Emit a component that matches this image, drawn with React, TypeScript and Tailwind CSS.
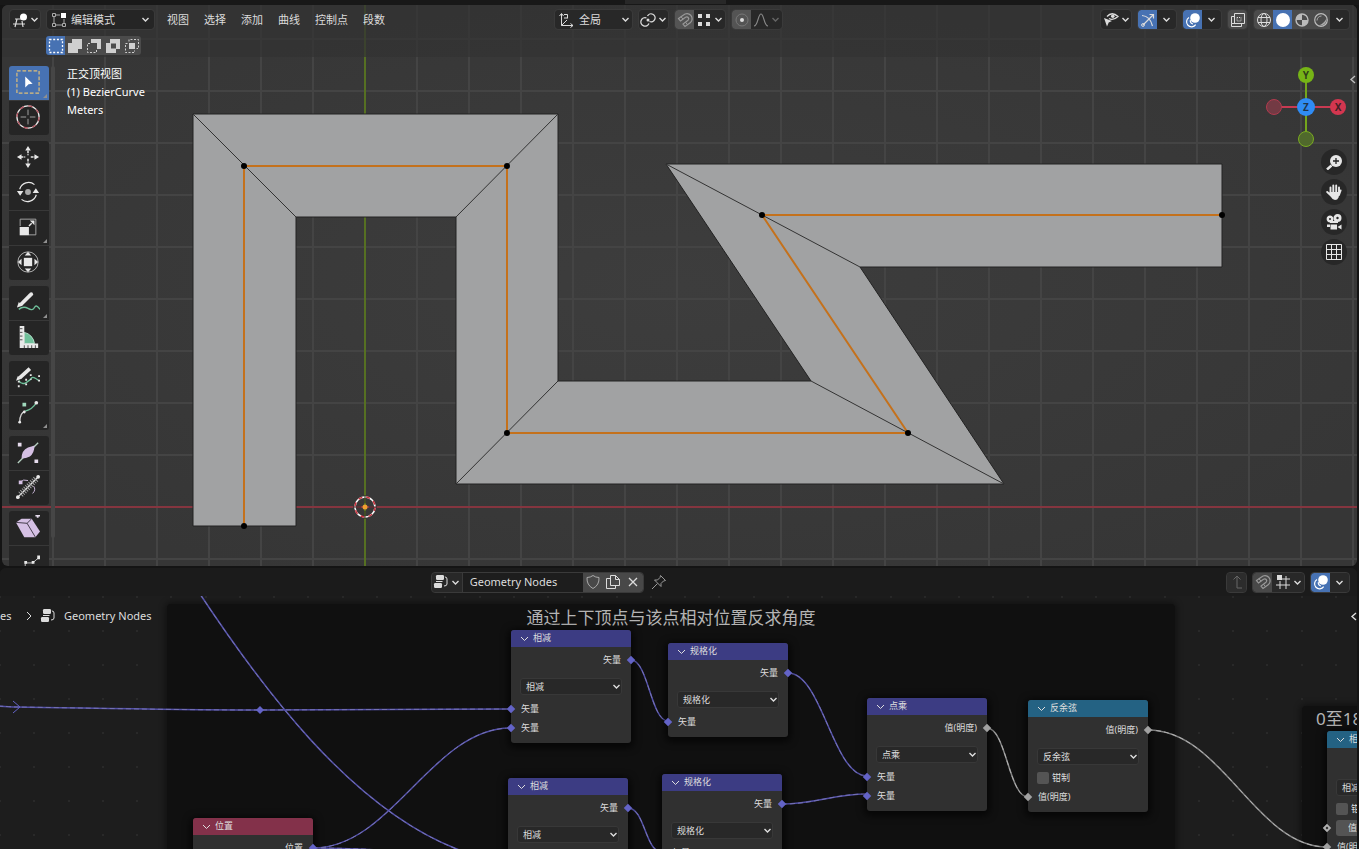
import type { ReactNode } from "react";

type Row =
  | { kind: "check"; label: string }
  | { kind: "field"; label: string }
  | { kind: "input"; label: string };

type GraphNode = {
  id: string;
  x: number;
  y: number;
  title: string;
  tone: "vector" | "math" | "input";
  output: string;
  outputType: "vector" | "value";
  operation?: string;
  rows: Row[];
};

const menus = ["视图", "选择", "添加", "曲线", "控制点", "段数"];

const nodes: GraphNode[] = [
  {
    id: "subtract-a",
    x: 511,
    y: 62,
    title: "相减",
    tone: "vector",
    output: "矢量",
    outputType: "vector",
    operation: "相减",
    rows: [
      { kind: "input", label: "矢量" },
      { kind: "input", label: "矢量" },
    ],
  },
  {
    id: "normalize-a",
    x: 668,
    y: 75,
    title: "规格化",
    tone: "vector",
    output: "矢量",
    outputType: "vector",
    operation: "规格化",
    rows: [{ kind: "input", label: "矢量" }],
  },
  {
    id: "subtract-b",
    x: 508,
    y: 210,
    title: "相减",
    tone: "vector",
    output: "矢量",
    outputType: "vector",
    operation: "相减",
    rows: [
      { kind: "input", label: "矢量" },
      { kind: "input", label: "矢量" },
    ],
  },
  {
    id: "normalize-b",
    x: 662,
    y: 206,
    title: "规格化",
    tone: "vector",
    output: "矢量",
    outputType: "vector",
    operation: "规格化",
    rows: [{ kind: "input", label: "矢量" }],
  },
  {
    id: "dot",
    x: 867,
    y: 130,
    title: "点乘",
    tone: "vector",
    output: "值(明度)",
    outputType: "value",
    operation: "点乘",
    rows: [
      { kind: "input", label: "矢量" },
      { kind: "input", label: "矢量" },
    ],
  },
  {
    id: "arccos",
    x: 1028,
    y: 132,
    title: "反余弦",
    tone: "math",
    output: "值(明度)",
    outputType: "value",
    operation: "反余弦",
    rows: [
      { kind: "check", label: "钳制" },
      { kind: "input", label: "值(明度)" },
    ],
  },
  {
    id: "position",
    x: 193,
    y: 250,
    title: "位置",
    tone: "input",
    output: "位置",
    outputType: "vector",
    rows: [],
  },
  {
    id: "subtract-c",
    x: 1327,
    y: 163,
    title: "相减",
    tone: "math",
    output: "值(明度)",
    outputType: "value",
    operation: "相减",
    rows: [
      { kind: "check", label: "钳制" },
      { kind: "field", label: "值(明度)" },
      { kind: "input", label: "值(明度)" },
    ],
  },
];

const vectorLinks = [
  "M-10 138 C5 138 10 139 16 139 C90 140 170 142 260 142 L511 141",
  "M196 20 C258 114 350 242 462 283",
  "M313 280 C392 280 432 160 511 160",
  "M313 280 C392 280 430 288 508 288",
  "M631 92 C648 92 651 153 668 153",
  "M628 240 C645 240 645 284 662 284",
  "M788 105 C822 105 833 208 867 208",
  "M782 236 C815 236 834 226 867 226",
];

const valueLinks = [
  "M987 160 C1006 160 1009 229 1028 229",
  "M1148 162 C1222 162 1256 279 1327 279",
];

const headerTone = {
  vector: "bg-[#3c3c83]",
  math: "bg-[#246283]",
  input: "bg-[#83314a]",
};

function Icon({ children, size = 16 }: { children: ReactNode; size?: number }) {
  return (
    <svg
      width={size}
      height={size}
      viewBox={size === 16 ? "0 0 16 16" : "0 0 26 26"}
      fill="none"
      stroke="currentColor"
      className="shrink-0"
      aria-hidden="true"
    >
      {children}
    </svg>
  );
}

function Chevron() {
  return (
    <svg width="9" height="9" viewBox="0 0 9 9" fill="none" stroke="currentColor" strokeWidth="1.4" className="pointer-events-none shrink-0" aria-hidden="true">
      <path d="M1.5 3L4.5 6L7.5 3" />
    </svg>
  );
}

function MagnetIcon() {
  return (
    <Icon>
      <path d="M1.5 6.5L6.5 3A5 5 0 0 1 13.5 10.5L8 14.5L6 12L11 8.2A1.8 1.8 0 0 0 8.5 5.3L3.5 9Z" strokeWidth="1.2" />
      <path d="M10.5 12.7L8.500 10.2M4 4.700L6 7.200" />
    </Icon>
  );
}

function OverlayIcon() {
  return (
    <Icon>
      <circle cx="10" cy="6" r="4.8" fill="currentColor" stroke="none" />
      <path d="M4 5.5A5 5 0 1 0 10.7 12.6" strokeWidth="1.2" />
      <path d="M5.4 8.2A3 3 0 0 0 8 12" strokeWidth="1.2" />
    </Icon>
  );
}

function NodeTreeIcon() {
  return (
    <Icon>
      <rect x="3" y="1" width="8" height="5" rx="1.2" fill="currentColor" stroke="none" />
      <rect x="1" y="9" width="8" height="5" rx="1.2" fill="currentColor" stroke="none" />
      <path d="M3 7.5H9.5M12 3Q14 3 14 5V10Q14 12 11 12" />
    </Icon>
  );
}

type HeaderButtonProps = {
  label: string;
  children: ReactNode;
  className?: string;
};

function HeaderButton({ label, children, className = "w-[19px] bg-[#4b4b4b]" }: HeaderButtonProps) {
  return (
    <button type="button" aria-label={label} className={`flex h-[19px] items-center justify-center ${className}`}>
      {children}
    </button>
  );
}

function Group({ children }: { children: ReactNode }) {
  return (
    <div className="flex overflow-hidden rounded-[3px] bg-[#282828] outline outline-[#3a3a3a]">{children}</div>
  );
}

function ViewportHeader() {
  return (
    <header className="bg-[#333]/75 px-2 pt-[5px] pb-0.5 text-[#dcdcdc]">
      <div className="grid grid-cols-[1fr_auto_1fr] items-center">
        <div className="flex items-center">
          <Group>
            <HeaderButton label="编辑器类型" className="w-[30px] gap-0.5">
              <Icon>
                <path d="M3 7H9M1 12H13M5 7L3 15M10 9L11 15" strokeWidth="1.2" />
                <circle cx="11.5" cy="5" r="3.5" fill="#fff" stroke="none" />
              </Icon>
              <Chevron />
            </HeaderButton>
          </Group>
          <div className="ml-[7px] flex h-[19px] w-[107px] items-center rounded-[3px] bg-[#252525] pr-1 pl-1 outline outline-[#3a3a3a]">
            <Icon>
              <path d="M3 5V11M5 3H9M5 13H11M13 7V11" stroke="#aaa" />
              <path d="M1.5 1.5H4.5V4.5H1.5ZM1.5 11.5H4.5V14.5H1.5ZM11.5 11.5H14.5V14.5H11.5Z" stroke="#aaa" />
              <rect x="10" y="1" width="5" height="5" fill="#fff" stroke="none" />
            </Icon>
            <select aria-label="模式" className="ml-1 min-w-0 flex-1 appearance-none bg-transparent">
              <option>编辑模式</option>
              <option>物体模式</option>
            </select>
            <Chevron />
          </div>
          <nav className="ml-[13px] flex gap-[15px]">
            {menus.map((menu) => (
              <button key={menu} type="button">
                {menu}
              </button>
            ))}
          </nav>
        </div>

        <div className="flex items-center gap-[7px] pr-[22px]">
          <div className="flex h-[19px] w-[77px] items-center rounded-[3px] bg-[#282828] pr-0.5 pl-1 outline outline-[#3a3a3a]">
            <Icon>
              <path d="M2.5 2V13.5H14M2.5 13.5L8 8M0.5 4L2.5 1.5L4.5 4M11.5 11.5L14 13.5L11.5 15.5" />
              <path d="M5 2.5H8.5M8.5 2.5V6.5M5 6H8" />
            </Icon>
            <select aria-label="变换坐标系" className="ml-1 min-w-0 flex-1 appearance-none bg-transparent">
              <option>全局</option>
              <option>局部</option>
            </select>
            <Chevron />
          </div>
          <Group>
            <HeaderButton label="轴心点" className="w-[29px] gap-0.5">
              <Icon>
                <path d="M9 11.500A4.200 4.200 0 1 1 6.500 6M7.500 4A4 4 0 1 1 9.500 9.500" strokeWidth="1.3" />
                <circle cx="8" cy="8" r="1.5" fill="currentColor" stroke="none" />
              </Icon>
              <Chevron />
            </HeaderButton>
          </Group>
          <Group>
            <HeaderButton label="吸附" className="w-[19px] bg-[#545454] text-[#999]">
              <MagnetIcon />
            </HeaderButton>
            <HeaderButton label="吸附至" className="w-[31px] gap-0.5">
              <Icon>
                <path d="M2 2h4v4h-4zM10 2h4v4h-4zM2 10h4v4h-4zM10 10h4v4h-4z" fill="currentColor" stroke="none" />
              </Icon>
              <Chevron />
            </HeaderButton>
          </Group>
          <Group>
            <HeaderButton label="衰减编辑" className="w-[19px] bg-[#545454]">
              <Icon>
                <circle cx="8" cy="8" r="6" stroke="#777" />
                <circle cx="8" cy="8" r="2" fill="currentColor" stroke="none" />
              </Icon>
            </HeaderButton>
            <HeaderButton label="衰减类型" className="w-[31px] gap-0.5 text-[#666]">
              <Icon>
                <path d="M1 14C5 14 5 2 8 2S11 14 15 14" stroke="#888" strokeWidth="1.2" />
              </Icon>
              <Chevron />
            </HeaderButton>
          </Group>
        </div>

        <div className="flex items-center justify-end gap-[7px]">
          <Group>
            <HeaderButton label="可见性" className="w-[30px] gap-0.5">
              <Icon>
                <path d="M4 4.5Q9 -1 15 4.5Q10 9 6 6.5" strokeWidth="1.3" />
                <circle cx="9.8" cy="4.3" r="1.8" fill="currentColor" stroke="none" />
                <path d="M1 6L9 9L5.7 10.5L4 14.5Z" fill="currentColor" stroke="none" />
              </Icon>
              <Chevron />
            </HeaderButton>
          </Group>
          <Group>
            <HeaderButton label="显示 Gizmo" className="w-[19px] bg-[#4772b3]">
              <Icon>
                <path d="M3 13L13 3M9.5 2.5H13.5V6.5M2 3.5Q10 4 12.5 14" strokeWidth="1.2" />
                <circle cx="3" cy="13" r="1.4" />
              </Icon>
            </HeaderButton>
            <HeaderButton label="Gizmo 选项" className="w-[19px]">
              <Chevron />
            </HeaderButton>
          </Group>
          <Group>
            <HeaderButton label="显示叠加层" className="w-[19px] bg-[#4772b3] text-white">
              <OverlayIcon />
            </HeaderButton>
            <HeaderButton label="叠加层选项" className="w-[19px]">
              <Chevron />
            </HeaderButton>
          </Group>
          <Group>
            <HeaderButton label="透视模式">
              <Icon>
                <path d="M5 11.5H1.5V14.5H11.5V11.5M4.5 1.5H14.5V11.5H4.5Z" />
                <path d="M1.5 11.5V4.5H4.5" />
                <path d="M7 5.5H11V9H7Z" strokeDasharray="1 1" />
              </Icon>
            </HeaderButton>
          </Group>
          <Group>
            <HeaderButton label="线框">
              <Icon>
                <circle cx="8" cy="8" r="6.5" />
                <ellipse cx="8" cy="8" rx="3" ry="6.5" />
                <path d="M2 5.5H14M2 10.5H14" />
              </Icon>
            </HeaderButton>
            <HeaderButton label="实体" className="w-[19px] bg-[#4772b3]">
              <Icon>
                <circle cx="8" cy="8" r="7" fill="#fff" stroke="none" />
              </Icon>
            </HeaderButton>
            <HeaderButton label="材质预览">
              <Icon>
                <circle cx="8" cy="8" r="6" strokeWidth="1.4" stroke="#bbb" />
                <path d="M8 2A6 6 0 0 0 2 8H8ZM8 8V14A6 6 0 0 0 14 8Z" fill="#bbb" stroke="none" />
              </Icon>
            </HeaderButton>
            <HeaderButton label="渲染">
              <Icon>
                <circle cx="8" cy="8" r="6.3" strokeWidth="1.2" stroke="#bbb" />
                <path d="M4 8.5A4.5 4.5 0 0 1 8.5 4" stroke="#aaa" />
                <path d="M6 13.5A6.5 6.5 0 0 0 13.500 6Q12 11 6 13.500Z" fill="#aaa" stroke="none" />
              </Icon>
            </HeaderButton>
            <HeaderButton label="着色选项" className="w-[19px]">
              <Chevron />
            </HeaderButton>
          </Group>
        </div>
      </div>

      <div className="mt-[7px] ml-9 flex w-fit overflow-hidden rounded-[3px] text-[#cfcfcf]">
        <HeaderButton label="新选区" className="w-[19px] bg-[#4772b3] text-white">
          <Icon>
            <path d="M1.5 1.5H14.5V14.5H1.5Z" strokeDasharray="2 1.7" strokeWidth="1.3" />
          </Icon>
        </HeaderButton>
        <HeaderButton label="扩展选区">
          <Icon>
            <path d="M5 1H15V11H11V15H1V5H5Z" fill="currentColor" stroke="none" />
          </Icon>
        </HeaderButton>
        <HeaderButton label="减去选区">
          <Icon>
            <path d="M5 1H15V11H11V5H5Z" fill="currentColor" stroke="none" />
            <path d="M4 5.5H1.5V14.5H10.5V12" strokeDasharray="2 1.5" />
          </Icon>
        </HeaderButton>
        <HeaderButton label="差集选区">
          <Icon>
            <path d="M5 1H15V11H11V15H1V5H5ZM6 5.5V10.5H11V5.5Z" fill="currentColor" fillRule="evenodd" stroke="none" />
          </Icon>
        </HeaderButton>
        <HeaderButton label="交集选区">
          <Icon>
            <path d="M5 5H11V11H5Z" fill="currentColor" stroke="none" />
            <path d="M5 3.5V1.5H14.5V10.5H12.5M3.5 5.5H1.5V14.5H10.5V12.5" strokeDasharray="2 1.5" />
          </Icon>
        </HeaderButton>
      </div>
    </header>
  );
}

type Tool = { label: string; icon: ReactNode; active?: boolean; more?: boolean };

const toolGroups: Tool[][] = [
  [
    {
      label: "框选",
      active: true,
      more: true,
      icon: (
        <>
          <path d="M1 1H25V25H1Z" stroke="#e0c07a" strokeWidth="1.3" strokeDasharray="4 2" />
          <path d="M10 7L18 15L13.6 15.4L10 19Z" fill="#fff" stroke="none" />
        </>
      ),
    },
    {
      label: "游标",
      icon: (
        <>
          <circle cx="13" cy="13" r="12" stroke="#e8e8e8" strokeWidth="1.4" />
          <circle cx="13" cy="13" r="12" stroke="#b0505c" strokeWidth="1.4" strokeDasharray="4.7 4.7" />
          <path d="M13 5V11M13 15V21M5 13H11M15 13H21" stroke="#aaa" />
        </>
      ),
    },
  ],
  [
    {
      label: "移动",
      icon: (
        <>
          <path d="M13 6V11M13 15V20M5 13H10M16 13H21" strokeWidth="1.6" strokeDasharray="3 1" />
          <path d="M13 1L16 6H10ZM13 25L16 20H10ZM1 13L6 10V16ZM25 13L20 10V16Z" fill="currentColor" stroke="none" />
        </>
      ),
    },
    {
      label: "旋转",
      icon: (
        <>
          <path d="M4 10A10 10 0 0 1 20 5M22 16A10 10 0 0 1 6 21" strokeWidth="1.3" />
          <path d="M1 12H8L4.5 17ZM18 14H25L21.5 9Z" fill="currentColor" stroke="none" />
          <circle cx="13" cy="13" r="3.2" fill="#aaa" stroke="none" />
        </>
      ),
    },
    {
      label: "缩放",
      more: true,
      icon: (
        <>
          <path d="M4.5 12V4.5H21.5V21.5H14" stroke="#aaa" />
          <rect x="4" y="13" width="10" height="9" fill="currentColor" stroke="none" />
          <path d="M14 12L17 9" strokeWidth="1.5" />
          <path d="M20 6V11L15 6Z" fill="currentColor" stroke="none" />
        </>
      ),
    },
    {
      label: "变换",
      icon: (
        <>
          <circle cx="13" cy="13" r="11" stroke="#bbb" />
          <rect x="8.5" y="8.5" width="9" height="9" fill="currentColor" stroke="none" />
          <path d="M13 2L16.5 6H9.5ZM13 24L16.5 20H9.5ZM2 13L6 9.5V16.5ZM24 13L20 9.5V16.5Z" fill="currentColor" stroke="none" />
        </>
      ),
    },
  ],
  [
    {
      label: "标注",
      more: true,
      icon: (
        <>
          <path d="M3 21Q8 17 13 20T20 19T26 21" stroke="#6fc09a" strokeWidth="1.5" />
          <path d="M5 16L16 5" strokeWidth="4" />
          <path d="M1 19L3 13L7 17Z" fill="currentColor" stroke="none" />
          <circle cx="16.5" cy="4.5" r="2" fill="currentColor" stroke="none" />
        </>
      ),
    },
    {
      label: "测量",
      icon: (
        <>
          <path d="M9 8A14 14 0 0 1 20 20H9Z" fill="#6fc09a" stroke="#bde6d0" />
          <path d="M4 1H9V20H24V25H4Z" fill="currentColor" stroke="none" />
          <path d="M4 4H7M4 8H7M4 12H7M4 16H7M9 25V22M13 25V22M17 25V22M21 25V22" stroke="#444" />
        </>
      ),
    },
  ],
  [
    {
      label: "绘制",
      icon: (
        <>
          <path d="M3 17Q6 22 11 19T17 14T25 17" stroke="#6fc09a" strokeWidth="1.5" />
          <path d="M4 14L15 4" strokeWidth="4" />
          <path d="M0 17L2 12L6 15Z" fill="currentColor" stroke="none" />
          <path d="M3 17V24M11 15V23M16 10V16M25 11V19" strokeDasharray="2 3" strokeWidth="2" />
        </>
      ),
    },
    {
      label: "曲线笔",
      more: true,
      icon: (
        <>
          <path d="M4 24Q4 14 10 12" stroke="#d0d0d0" strokeWidth="1.5" />
          <path d="M10 12Q18 10 22 3" stroke="#6fc09a" strokeWidth="1.5" />
          <rect x="7" y="3" width="4" height="4" fill="#9fd8bc" stroke="none" />
          <circle cx="22" cy="3" r="2" fill="currentColor" stroke="none" />
          <circle cx="9" cy="13" r="1.5" fill="currentColor" stroke="none" />
          <circle cx="4" cy="24" r="1.5" fill="currentColor" stroke="none" />
        </>
      ),
    },
  ],
  [
    {
      label: "半径",
      icon: (
        <>
          <path d="M2 25L24 3" stroke="#b5cfc0" strokeWidth="1.5" />
          <path d="M6 20Q6 11 13 8Q17 7 20 6Q20 14 15 18Q11 20 6 20Z" fill="#d5c0e4" stroke="none" />
          <path d="M2 3H6V7H2ZM20 21H24V25H20Z" fill="#e6dced" stroke="none" />
        </>
      ),
    },
    {
      label: "倾斜",
      icon: (
        <>
          <path d="M2 24L25 1" strokeWidth="1.4" />
          <path d="M5 21L22 4" strokeWidth="7" strokeDasharray="1 1.5" stroke="#a9a9a9" />
          <path d="M4 8Q8 4 13 6M19 12Q22 16 18 20" stroke="#d5c0e4" />
          <circle cx="2" cy="24" r="2" fill="currentColor" stroke="none" />
          <circle cx="24" cy="2" r="2" fill="currentColor" stroke="none" />
          <rect x="3" y="6" width="4" height="4" fill="#d5c0e4" stroke="none" />
        </>
      ),
    },
  ],
  [
    {
      label: "切变",
      icon: (
        <>
          <path d="M0 8L6 4H17L26 18L21 24H9Z" fill="#d5c0e4" stroke="none" />
          <path d="M0 8L12 9L21 24M12 9L17 4" stroke="#3a3340" />
          <path d="M23.5 -2V3M21 0.500H26" stroke="#e6dced" strokeWidth="2" />
        </>
      ),
    },
    {
      label: "随机",
      icon: (
        <>
          <path d="M10 25V14H18L25 8" stroke="#ccc" />
          <path d="M9 12H12V15H9ZM17 12H20V15H17ZM23 6H27V10H23Z" fill="currentColor" stroke="none" />
        </>
      ),
    },
  ],
];

function Toolbar() {
  return (
    <aside className="flex h-full gap-0.5 overflow-hidden pt-[9px] pl-[7px]">
      <div className="flex w-10 flex-col gap-1.5">
        {toolGroups.map((group) => (
          <div key={group[0].label} className="flex shrink-0 flex-col gap-px overflow-hidden rounded-[3px] bg-[#383838]">
            {group.map((tool) => (
              <button
                key={tool.label}
                type="button"
                aria-label={tool.label}
                aria-pressed={!!tool.active}
                className={`relative flex h-[34px] items-center justify-center pr-0.5 pb-0.5 text-[#e8e8e8] ${
                  tool.active ? "bg-[#4772b3]" : "bg-[#252525]"
                }`}
              >
                <Icon size={24}>{tool.icon}</Icon>
                {tool.more && (
                  <svg width="4" height="4" className="absolute right-0.5 bottom-0.5" aria-hidden="true">
                    <path d="M4 0V4H0Z" fill="#909090" />
                  </svg>
                )}
              </button>
            ))}
          </div>
        ))}
      </div>
      <div className="mb-7 w-1 rounded-full bg-[#464646]" />
    </aside>
  );
}

function AxisGizmo() {
  return (
    <svg width="82" height="80" viewBox="0 0 82 80" className="text-[10px] font-bold" role="img" aria-label="视图轴向">
      <path d="M9 40H73" stroke="#c93a52" strokeWidth="2" />
      <path d="M41 8V72" stroke="#74a51c" strokeWidth="2" />
      <circle cx="9" cy="40" r="7.5" fill="#733a44" stroke="#b03c4f" />
      <circle cx="41" cy="72" r="7.5" fill="#50692c" stroke="#7aab22" />
      <circle cx="41" cy="8" r="8" fill="#76b416" />
      <circle cx="73" cy="40" r="8" fill="#d3364f" />
      <circle cx="41" cy="40" r="9" fill="#2f8cf5" />
      <g fill="#1b1b1b" fillOpacity="0.8" textAnchor="middle">
        <text x="41" y="12">Y</text>
        <text x="73" y="44">X</text>
        <text x="41" y="44">Z</text>
      </g>
    </svg>
  );
}

const navButtons: { label: string; icon: ReactNode }[] = [
  {
    label: "缩放视图",
    icon: (
      <>
        <circle cx="10" cy="7" r="6" fill="currentColor" stroke="none" />
        <path d="M5.5 11.5L1 15.5" strokeWidth="2.5" />
        <path d="M10 4V10M7 7H13" stroke="#222" strokeWidth="1.3" />
      </>
    ),
  },
  {
    label: "平移视图",
    icon: (
      <>
        <path
          d="M4.5 9.5V3.5M7.3 8V1.5M10.2 8V1.5M13 9V3.5M5.5 12L1.2 8M14.6 6.5L13 11"
          strokeWidth="1.9"
          strokeLinecap="round"
        />
        <path d="M3.6 8H14L12.5 13.5Q11.5 16 9 16Q6.5 16 5 13Z" fill="currentColor" stroke="none" />
      </>
    ),
  },
  {
    label: "相机视图",
    icon: (
      <>
        <circle cx="4" cy="5" r="2.2" strokeWidth="2.4" />
        <circle cx="11.5" cy="4" r="2.6" strokeWidth="2.8" />
        <path d="M4 7H12V9H4ZM4.5 10.5H11V15.5H4.500ZM11.5 13L15.5 10.5V15.5ZM1 10.500H4V13H1Z" fill="currentColor" stroke="none" />
      </>
    ),
  },
  {
    label: "切换正交",
    icon: <path d="M0.5 0.5H15.5V15.5H0.5ZM5.5 0V16M10.5 0V16M0 5.5H16M0 10.5H16" />,
  },
];

function NavColumn() {
  return (
    <div className="mr-2.5 ml-auto flex flex-col items-end pt-2.5">
      <AxisGizmo />
      <div className="mt-0.5 flex flex-col gap-1">
        {navButtons.map((button) => (
          <button
            key={button.label}
            type="button"
            aria-label={button.label}
            className="flex size-[26px] items-center justify-center rounded-full bg-[#272727] text-[#e6e6e6]"
          >
            <Icon>{button.icon}</Icon>
          </button>
        ))}
      </div>
    </div>
  );
}

// World origin sits at 363,502 and one grid unit spans 52px.
function Scene() {
  const points = [
    [242, 521],
    [242, 161],
    [505, 161],
    [505, 428],
    [906, 428],
    [760, 210],
    [1220, 210],
  ];

  return (
    <svg className="absolute inset-0 h-full w-full" role="img" aria-label="BezierCurve">
      <defs>
        <pattern id="grid" x="-2" y="-19" width="52" height="52" patternUnits="userSpaceOnUse">
          <rect width="2" height="52" fill="#444" />
          <rect width="52" height="2" fill="#444" />
        </pattern>
        <radialGradient id="backdrop" cx="50%" cy="50%" r="60%">
          <stop offset="0" stopColor="#3d3d3d" />
          <stop offset="1" stopColor="#363636" />
        </radialGradient>
      </defs>
      <rect width="100%" height="100%" fill="url(#backdrop)" />
      <rect width="100%" height="100%" fill="url(#grid)" />
      <line x1="0" x2="100%" y1="502" y2="502" stroke="#85353f" strokeWidth="2" />
      <line x1="363" x2="363" y1="0" y2="100%" stroke="#567022" strokeWidth="2" />

      <path
        d="M191 109H556V376H809L664 159H1220V262H858L1002 479H454V212H294V521H191Z"
        fill="#a1a2a3"
        stroke="#222"
      />
      <path
        d="M191 109L294 212M556 109L454 212M556 376L454 479M809 376L1002 479M664 159L858 262"
        stroke="#333"
      />
      <polyline points={points.join(" ")} fill="none" stroke="#c4711c" strokeWidth="2" />
      {points.map(([x, y]) => (
        <circle key={`${x}-${y}`} cx={x} cy={y} r="3" fill="#000" />
      ))}

      <circle cx="363" cy="502" r="10" fill="none" stroke="#fff" strokeWidth="1.5" />
      <circle cx="363" cy="502" r="10" fill="none" stroke="#c8303c" strokeWidth="1.5" strokeDasharray="4 4" />
      <path d="M363 490V498M363 506V514M351 502H359M367 502H375" stroke="#2b2b2b" />
      <circle cx="363" cy="502" r="2.5" fill="#f0a030" />
    </svg>
  );
}

function Viewport() {
  return (
    <section className="relative mx-0.5 min-h-0 flex-2 overflow-hidden rounded-md">
      <Scene />
      <div className="relative flex h-full flex-col">
        <ViewportHeader />
        <div className="flex min-h-0 flex-1">
          <Toolbar />
          <div className="pt-2 pl-3 leading-[18px] text-white">
            <p>正交顶视图</p>
            <p>(1) BezierCurve</p>
            <p>Meters</p>
          </div>
          <NavColumn />
        </div>
      </div>
      <button type="button" aria-label="展开侧栏" className="absolute top-[66px] right-0 flex h-4 w-2 items-center text-[#bbb]">
        <svg width="7" height="9" fill="none" stroke="currentColor" strokeWidth="1.4" aria-hidden="true">
          <path d="M6 1L2 4.5L6 8" />
        </svg>
      </button>
    </section>
  );
}

function Socket({ type, side, hollow }: { type: "vector" | "value"; side: "left" | "right"; hollow?: boolean }) {
  const color = type === "vector" ? "bg-[#6363c7]" : "bg-[#a1a1a1]";
  return (
    <span
      className={`absolute top-1/2 z-10 size-1.5 -translate-y-1/2 rotate-45 ${
        hollow ? "border-2 border-[#b0b0b0] bg-[#222]" : color
      } ${side === "left" ? "-left-[3px]" : "-right-[3px]"}`}
    />
  );
}

function NodeRow({ row, type }: { row: Row; type: "vector" | "value" }) {
  if (row.kind === "check") {
    return (
      <label className="flex h-[18px] items-center gap-[3px] pl-[9px]">
        <input type="checkbox" className="size-3 appearance-none rounded-[2px] bg-[#545454]" />
        {row.label}
      </label>
    );
  }
  if (row.kind === "field") {
    return (
      <div className="relative flex h-[19px] items-center px-[9px]">
        <Socket type={type} side="left" hollow />
        <input aria-label={row.label} defaultValue={row.label} className="h-4 w-full rounded-[3px] bg-[#545454] pl-3" />
      </div>
    );
  }
  return (
    <div className="relative flex h-[19px] items-center pl-2.5">
      <Socket type={type} side="left" />
      {row.label}
    </div>
  );
}

function NodeCard({ node }: { node: GraphNode }) {
  return (
    <article
      className="absolute w-[120px] rounded-[3px] bg-[#303030] pb-1.5 text-[9px] leading-[18px] text-[#dedede] shadow-[0_2px_7px_3px_rgba(0,0,0,0.6)]"
      style={{ left: node.x, top: node.y }}
    >
      <h3 className={`flex h-[17px] items-center gap-1 rounded-t-[3px] pb-px pl-[9px] ${headerTone[node.tone]}`}>
        <svg width="9" height="9" viewBox="0 0 9 9" fill="none" stroke="currentColor" aria-hidden="true">
          <path d="M1 3L4.5 6.5L8 3" />
        </svg>
        {node.title}
      </h3>
      <div className="relative mt-1 flex h-[18px] items-center justify-end pr-2.5">
        {node.output}
        <Socket type={node.outputType} side="right" />
      </div>
      {node.operation && (
        <div className="mx-[9px] mt-[9px] mb-1 flex h-[17px] items-center rounded-[3px] border border-[#383838] bg-[#282828]">
          <select aria-label="运算" className="min-w-0 flex-1 appearance-none bg-transparent pl-[5px]">
            <option>{node.operation}</option>
          </select>
          <Chevron />
        </div>
      )}
      {node.rows.map((row, i) => (
        <NodeRow key={i} row={row} type={node.tone === "math" ? "value" : "vector"} />
      ))}
    </article>
  );
}

function NodeCanvas() {
  return (
    <div className="absolute inset-0 overflow-hidden">
      <svg className="absolute inset-0 h-full w-full" aria-hidden="true">
        <defs>
          <pattern id="dots" x="-1" y="-6" width="137" height="34" patternUnits="userSpaceOnUse">
            <path d="M0 0h2v2h-2zM34 0h2v2h-2zM69 0h2v2h-2zM103 0h2v2h-2z" fill="#292929" />
          </pattern>
        </defs>
        <rect width="100%" height="100%" fill="url(#dots)" />
      </svg>
      <div className="absolute top-9 left-[167px] h-[400px] w-[1008px] rounded bg-[#101010] text-center text-[17px] leading-[27px] text-[#b4b4b4] shadow-[0_0_6px_2px_rgba(0,0,0,0.4)]">
        通过上下顶点与该点相对位置反求角度
      </div>
      <div className="absolute top-[138px] left-[1302px] h-[400px] w-[400px] rounded bg-[#101010] pl-3.5 text-[17px] leading-[26px] text-[#b4b4b4] shadow-[0_0_6px_2px_rgba(0,0,0,0.4)]">
        0至180度
      </div>
      <svg className="absolute inset-0 h-full w-full" fill="none" aria-hidden="true">
        <g strokeWidth="1.5">
          {vectorLinks.map((d) => (
            <path key={d} d={d} stroke="#5350a8" />
          ))}
          {valueLinks.map((d) => (
            <path key={d} d={d} stroke="#858585" />
          ))}
        </g>
        {vectorLinks.map((d) => (
          <path key={d} d={d} stroke="#7572b4" strokeDasharray="5 3" />
        ))}
        {valueLinks.map((d) => (
          <path key={d} d={d} stroke="#b0b0b0" strokeDasharray="5 3" />
        ))}
        <path d="M13 133L20 139L13 145" stroke="#6363c7" />
        <path d="M260 138L264 142L260 146L256 142Z" fill="#6363c7" />
      </svg>
      {nodes.map((node) => (
        <NodeCard key={node.id} node={node} />
      ))}
    </div>
  );
}

function NodeEditor() {
  return (
    <section className="relative mr-0.5 min-h-0 flex-1 overflow-hidden rounded-t-md bg-[#1d1d1d] text-[#dcdcdc]">
      <NodeCanvas />
      <header className="relative flex h-7 items-center bg-[#1b1b1b] pr-2">
        <div className="w-[32%] pr-1" />
        <Group>
          <HeaderButton label="节点树" className="w-[31px] gap-0.5 border-r border-[#3a3a3a]">
            <NodeTreeIcon />
            <Chevron />
          </HeaderButton>
          <input aria-label="名称" defaultValue="Geometry Nodes" className="w-[120px] bg-[#1d1d1d] pl-[7px]" />
          <HeaderButton label="伪用户" className="w-5 bg-[#484848]">
            <Icon>
              <path d="M8 1.5Q10.5 3.5 14 3.5Q14.5 11 8 14.5Q1.5 11 2 3.5Q5.5 3.5 8 1.5Z" stroke="#aaa" />
            </Icon>
          </HeaderButton>
          <HeaderButton label="新建节点树" className="w-5 bg-[#484848]">
            <Icon>
              <path d="M5.5 1.5H10.5L14.5 5.5V11.5H5.5ZM10.5 1.5V5.5H14.5M5 4.5H1.5V14.5H10.5V12" />
            </Icon>
          </HeaderButton>
          <HeaderButton label="断开" className="w-5 bg-[#484848]">
            <Icon>
              <path d="M4 4L12 12M12 4L4 12" strokeWidth="1.3" />
            </Icon>
          </HeaderButton>
        </Group>
        <button type="button" aria-label="固定" className="ml-2 text-[#9a9a9a]">
          <Icon>
            <path d="M9.5 1.5L14.5 6.5L12.5 7L10 9.5V12.5L3.5 6H6.5L9 3.5ZM6.5 9.5L1 15" />
          </Icon>
        </button>
        <div className="ml-auto flex gap-[7px]">
          <Group>
            <HeaderButton label="父级节点树" className="w-[19px] bg-[#2c2c2c] text-[#666]">
              <Icon>
                <path d="M8 14V2M4.5 5.5L8 2L11.5 5.5M8 14H13" />
              </Icon>
            </HeaderButton>
          </Group>
          <Group>
            <HeaderButton label="吸附" className="w-[19px] bg-[#484848] text-[#999]">
              <MagnetIcon />
            </HeaderButton>
            <HeaderButton label="吸附至" className="w-8 gap-0.5">
              <Icon>
                <path d="M5 7V15M11 2V15M7 5H15M1 11H15" />
                <path d="M2 1H7V6H2Z" fill="currentColor" stroke="none" />
              </Icon>
              <Chevron />
            </HeaderButton>
          </Group>
          <Group>
            <HeaderButton label="显示叠加层" className="w-[19px] bg-[#4772b3] text-white">
              <OverlayIcon />
            </HeaderButton>
            <HeaderButton label="叠加层选项" className="w-[19px]">
              <Chevron />
            </HeaderButton>
          </Group>
        </div>
      </header>
      <nav className="relative mt-3 flex h-4 items-center">
        <a href="#object" className="w-2.5 shrink-0">
          es
        </a>
        <svg width="6" height="10" fill="none" stroke="currentColor" className="ml-4" aria-hidden="true">
          <path d="M1 1L5 5L1 9" />
        </svg>
        <a href="#tree" className="ml-2 flex items-center gap-2">
          <NodeTreeIcon />
          Geometry Nodes
        </a>
        <svg width="7" height="9" fill="none" stroke="currentColor" strokeWidth="1.4" className="ml-auto" aria-hidden="true">
          <path d="M6 1L2 4.5L6 8" />
        </svg>
      </nav>
    </section>
  );
}

export default function App() {
  return (
    <div className="flex h-screen flex-col gap-0.5 overflow-hidden bg-[#141414] font-['Noto_Sans','Noto_Sans_CJK_SC',sans-serif] text-[11px] leading-4">
      <div className="-mb-0.5 flex h-[5px] shrink-0 bg-[#181818]">
        <div className="ml-[46%] h-1 w-[101px] bg-[#282828]" />
      </div>
      <Viewport />
      <NodeEditor />
    </div>
  );
}
